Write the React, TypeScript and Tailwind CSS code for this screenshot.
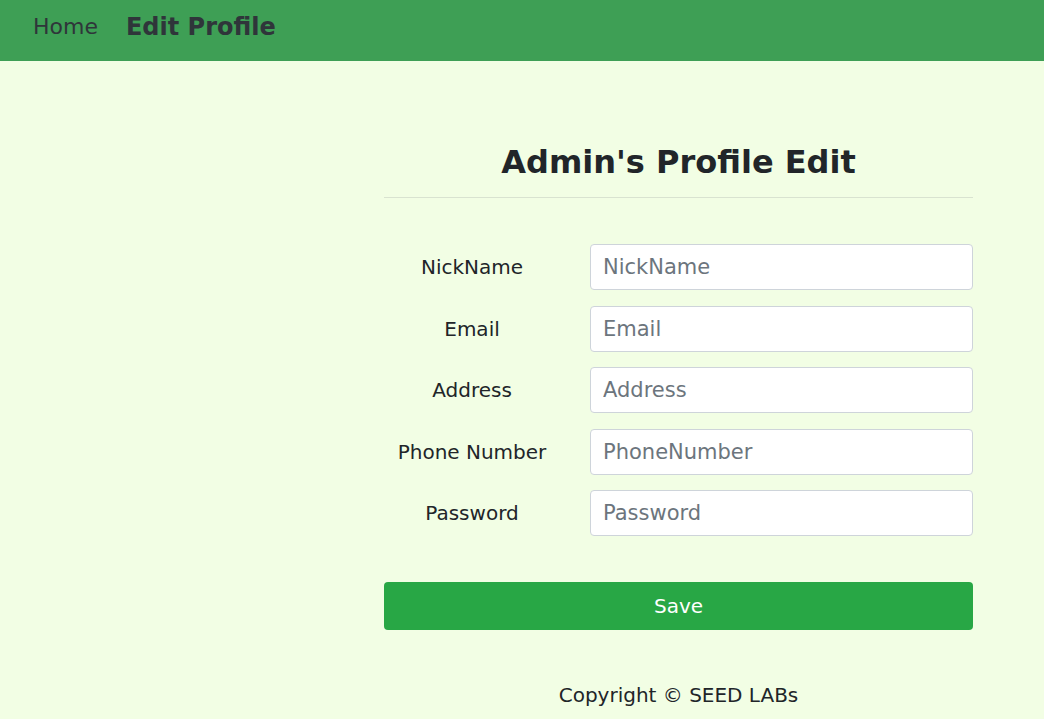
const fields = [
  { label: "NickName", placeholder: "NickName" },
  { label: "Email", placeholder: "Email" },
  { label: "Address", placeholder: "Address" },
  { label: "Phone Number", placeholder: "PhoneNumber" },
  { label: "Password", placeholder: "Password" },
];

const App = () => {
  return (
    <div className="min-h-[719px] bg-[#f2fee4] font-['DejaVu_Sans',sans-serif] text-[#212529]">
      <nav className="flex h-[61px] items-center gap-[28px] bg-[#3e9f55] pl-[33px] pb-[8px]">
        <span className="text-[22px] text-[#2f353a]">Home</span>
        <span className="text-[24px] font-bold text-[#2f353a]">Edit Profile</span>
      </nav>

      <div className="ml-[384px] w-[589px]">
        <h2 className="mt-[82px] text-center text-[32px] font-bold leading-[38px]">Admin's Profile Edit</h2>
        <hr className="mt-[16px] border-[#d9e3d0]" />

        <div className="mt-[46px] flex flex-col gap-[15.5px]">
          {fields.map((f) => (
            <div key={f.label} className="flex items-center">
              <label className="w-[176px] text-center text-[20px]">{f.label}</label>
              <input
                className="ml-[30px] h-[46px] flex-1 rounded-[4px] border border-[#ced4da] bg-white px-[12px] text-[21px] placeholder:text-[#6c757d] outline-none"
                placeholder={f.placeholder}
              />
            </div>
          ))}
        </div>

        <button className="mt-[46px] h-[48px] w-full rounded-[4px] bg-[#28a745] text-[20px] text-white">Save</button>

        <p className="mt-[50px] text-center text-[20px]">Copyright © SEED LABs</p>
      </div>
    </div>
  );
};

export default App;
